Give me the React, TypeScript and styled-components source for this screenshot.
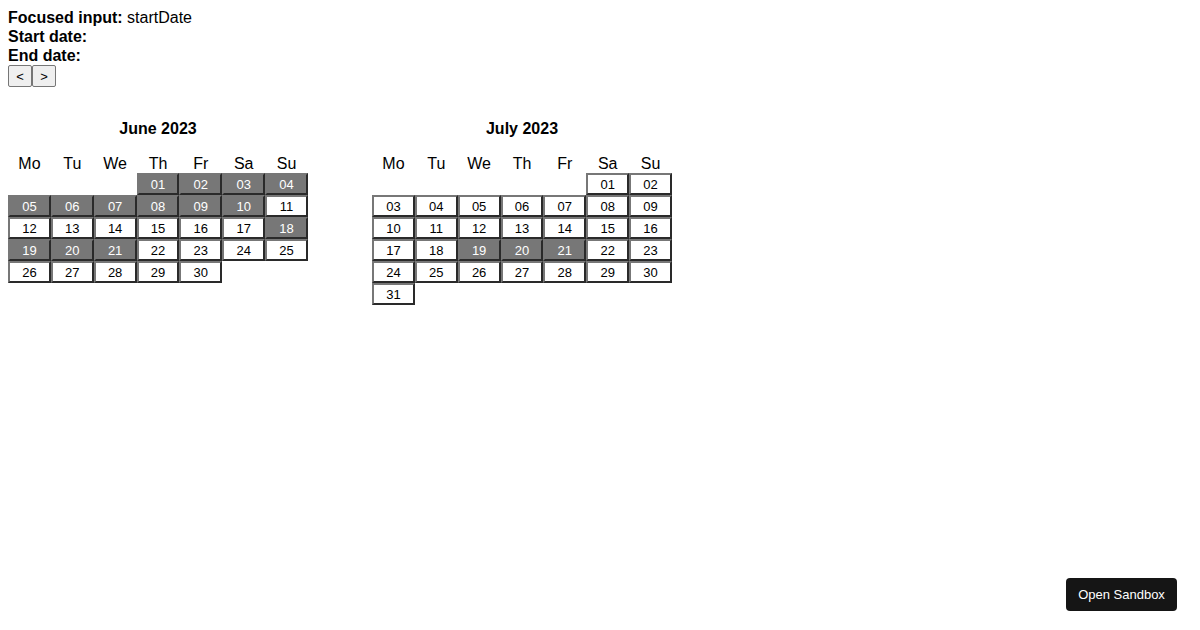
import React from "react";
import styled, { createGlobalStyle } from "styled-components";

const GlobalStyle = createGlobalStyle`
    body {
        margin: 8px;
        font-family: "Liberation Sans", Arial, sans-serif;
        font-size: 16px;
        color: #000;
        background: #fff;
    }
`;

const Info = styled.div`
    line-height: 19px;
`;

const Label = styled.b`
    font-weight: 700;
`;

const NavRow = styled.div`
    display: flex;
    height: 22px;
`;

const NavButton = styled.button`
    height: 22px;
    min-width: 24px;
    padding: 0 6px;
    font-family: "Liberation Sans", Arial, sans-serif;
    font-size: 13px;
    color: #000;
    background: #efefef;
    border: 1px solid #767676;
    border-radius: 2px;
`;

const Months = styled.div`
    display: flex;
    gap: 64px;
    padding-top: 32px;
`;

const Month = styled.div`
    display: flex;
    flex-direction: column;
    width: 300px;
`;

const Title = styled.div`
    font-weight: 700;
    text-align: center;
    line-height: 19px;
    margin-bottom: 16px;
`;

const Grid = styled.div<{ $rowHeight: number }>`
    display: grid;
    grid-template-columns: repeat(7, 1fr);
    grid-auto-rows: ${(p) => p.$rowHeight}px;
`;

const WeekDay = styled.div`
    text-align: center;
    line-height: 19px;
`;

const Day = styled.button<{ $selected?: boolean }>`
    width: 100%;
    height: 22px;
    padding: 0;
    font-family: "Liberation Sans", Arial, sans-serif;
    font-size: 13px;
    color: ${(p) => (p.$selected ? "#fff" : "#000")};
    background: ${(p) => (p.$selected ? "#777" : "#fff")};
    border: 2px solid;
    border-color: #777 #2a2a2a #2a2a2a #777;
    cursor: pointer;
`;

const Empty = styled.div``;

const SandboxButton = styled.button`
    position: fixed;
    right: 23px;
    bottom: 19px;
    width: 111px;
    height: 33px;
    background: #151515;
    color: #fff;
    border: none;
    border-radius: 4px;
    font-family: "Liberation Sans", Arial, sans-serif;
    font-size: 13px;
`;

const weekdays = ["Mo", "Tu", "We", "Th", "Fr", "Sa", "Su"];

type MonthData = {
    name: string;
    offset: number;
    days: number;
    selected: number[];
};

const months: MonthData[] = [
    {
        name: "June 2023",
        offset: 3,
        days: 30,
        selected: [1, 2, 3, 4, 5, 6, 7, 8, 9, 10, 18, 19, 20, 21],
    },
    { name: "July 2023", offset: 5, days: 31, selected: [19, 20, 21] },
];

const pad = (n: number) => (n < 10 ? "0" + n : String(n));

function Calendar({ data }: { data: MonthData }) {
    const cells = [];
    for (let i = 0; i < data.offset; i++) cells.push(<Empty key={"e" + i} />);
    for (let d = 1; d <= data.days; d++) {
        cells.push(
            <Day key={d} $selected={data.selected.includes(d)}>
                {pad(d)}
            </Day>
        );
    }
    return (
        <Month>
            <Title>{data.name}</Title>
            <Grid $rowHeight={19}>
                {weekdays.map((w) => (
                    <WeekDay key={w}>{w}</WeekDay>
                ))}
            </Grid>
            <Grid $rowHeight={22}>{cells}</Grid>
        </Month>
    );
}

export default function App() {
    return (
        <>
            <GlobalStyle />
            <Info>
                <Label>Focused input:</Label> startDate
            </Info>
            <Info>
                <Label>Start date:</Label>
            </Info>
            <Info>
                <Label>End date:</Label>
            </Info>
            <NavRow>
                <NavButton>&lt;</NavButton>
                <NavButton>&gt;</NavButton>
            </NavRow>
            <Months>
                {months.map((m) => (
                    <Calendar key={m.name} data={m} />
                ))}
            </Months>
            <SandboxButton>Open Sandbox</SandboxButton>
        </>
    );
}
